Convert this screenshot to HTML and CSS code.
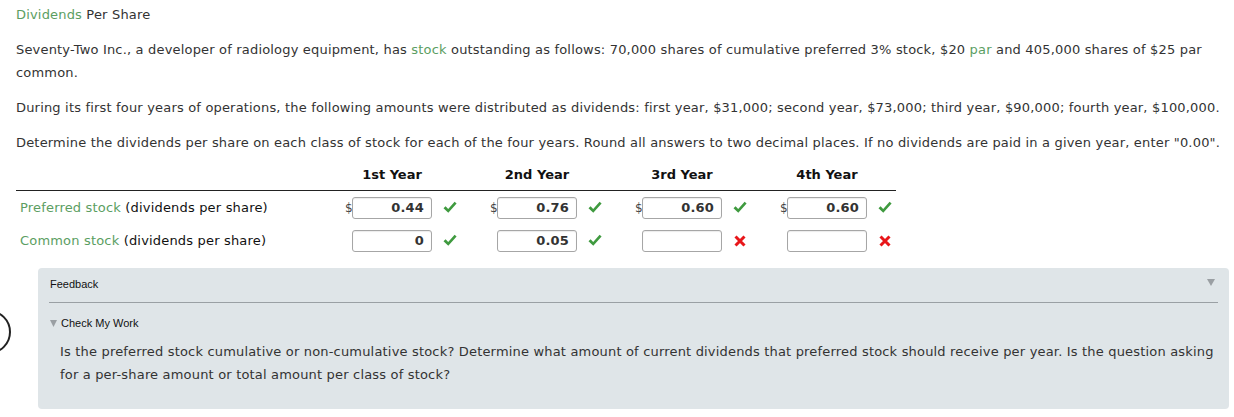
FILE: index.html
```html
<!DOCTYPE html>
<html>
<head>
<meta charset="utf-8">
<link rel="stylesheet" href="styles.css">
</head>
<body>
<div class="edge-circle"></div>
<div class="page">
  <div class="title"><span class="term">Dividends</span> Per Share</div>
  <p class="para">Seventy-Two Inc., a developer of radiology equipment, has <span class="term">stock</span> outstanding as follows: 70,000 shares of cumulative preferred 3% stock, $20 <span class="term">par</span> and 405,000 shares of $25 par common.</p>
  <p class="para">During its first four years of operations, the following amounts were distributed as dividends: first year, $31,000; second year, $73,000; third year, $90,000; fourth year, $100,000.</p>
  <p class="para">Determine the dividends per share on each class of stock for each of the four years. Round all answers to two decimal places. If no dividends are paid in a given year, enter "0.00".</p>

  <div class="grid">
    <div class="hcell"></div>
    <div class="hcell"><span class="hlabel">1st Year</span></div>
    <div class="hcell"><span class="hlabel">2nd Year</span></div>
    <div class="hcell"><span class="hlabel">3rd Year</span></div>
    <div class="hcell"><span class="hlabel">4th Year</span></div>

    <div class="lcell"><span class="term">Preferred stock</span> (dividends per share)</div>
    <div class="cell"><span class="dollar">$</span><span class="inp">0.44</span><span class="mark ok"><svg width="14" height="13" viewBox="0 0 14 13"><path d="M0.5 7.2 L2.6 5.3 L5.2 8 L11.6 0.8 L13.6 2.6 L5.3 11.8 Z" fill="#3f9a3f"/></svg></span></div>
    <div class="cell"><span class="dollar">$</span><span class="inp">0.76</span><span class="mark ok"><svg width="14" height="13" viewBox="0 0 14 13"><path d="M0.5 7.2 L2.6 5.3 L5.2 8 L11.6 0.8 L13.6 2.6 L5.3 11.8 Z" fill="#3f9a3f"/></svg></span></div>
    <div class="cell"><span class="dollar">$</span><span class="inp">0.60</span><span class="mark ok"><svg width="14" height="13" viewBox="0 0 14 13"><path d="M0.5 7.2 L2.6 5.3 L5.2 8 L11.6 0.8 L13.6 2.6 L5.3 11.8 Z" fill="#3f9a3f"/></svg></span></div>
    <div class="cell"><span class="dollar">$</span><span class="inp">0.60</span><span class="mark ok"><svg width="14" height="13" viewBox="0 0 14 13"><path d="M0.5 7.2 L2.6 5.3 L5.2 8 L11.6 0.8 L13.6 2.6 L5.3 11.8 Z" fill="#3f9a3f"/></svg></span></div>

    <div class="lcell"><span class="term">Common stock</span> (dividends per share)</div>
    <div class="cell"><span class="dollar"></span><span class="inp">0</span><span class="mark ok"><svg width="14" height="13" viewBox="0 0 14 13"><path d="M0.5 7.2 L2.6 5.3 L5.2 8 L11.6 0.8 L13.6 2.6 L5.3 11.8 Z" fill="#3f9a3f"/></svg></span></div>
    <div class="cell"><span class="dollar"></span><span class="inp">0.05</span><span class="mark ok"><svg width="14" height="13" viewBox="0 0 14 13"><path d="M0.5 7.2 L2.6 5.3 L5.2 8 L11.6 0.8 L13.6 2.6 L5.3 11.8 Z" fill="#3f9a3f"/></svg></span></div>
    <div class="cell"><span class="dollar"></span><span class="inp"></span><span class="mark bad"><svg width="12" height="12" viewBox="0 0 12 12"><path d="M1.5 1.5 L10.5 10.5 M10.5 1.5 L1.5 10.5" stroke="#e8161a" stroke-width="3"/></svg></span></div>
    <div class="cell"><span class="dollar"></span><span class="inp"></span><span class="mark bad"><svg width="12" height="12" viewBox="0 0 12 12"><path d="M1.5 1.5 L10.5 10.5 M10.5 1.5 L1.5 10.5" stroke="#e8161a" stroke-width="3"/></svg></span></div>
  </div>

  <div class="feedback">
    <div class="fb-head">
      <span>Feedback</span>
      <svg class="fb-toggle" width="8" height="7" viewBox="0 0 8 7"><path d="M0 0 L8 0 L4 7 Z" fill="#9a9fa3"/></svg>
    </div>
    <div class="cmw"><svg width="7" height="7" viewBox="0 0 7 7"><path d="M0 0 L7 0 L3.5 7 Z" fill="#9a9fa3"/></svg><span>Check My Work</span></div>
    <p class="fb-text">Is the preferred stock cumulative or non-cumulative stock? Determine what amount of current dividends that preferred stock should receive per year. Is the question asking for a per-share amount or total amount per class of stock?</p>
  </div>
</div>
</body>
</html>
```

FILE: styles.css
```css
html, body {
  margin: 0;
  padding: 0;
  background: #fff;
}
body {
  font-family: "DejaVu Sans", Verdana, sans-serif;
  font-size: 13px;
  letter-spacing: 0.18px;
  color: #333;
  position: relative;
  overflow: hidden;
  height: 417px;
}
.page {
  padding: 3px 5px 0 16px;
}
.term {
  color: #5b9e62;
}
.title {
  line-height: 23px;
}
.para {
  margin: 12px 0 0;
  line-height: 23px;
}
.grid {
  display: grid;
  grid-template-columns: 325px 145px 145px 145px 120px;
  width: 880px;
  margin-top: 6px;
}
.hcell {
  height: 30px;
  line-height: 30px;
  border-bottom: 1px solid #222;
  font-weight: bold;
  color: #111;
  letter-spacing: 0;
}
.hlabel {
  display: block;
  width: 80px;
  margin-left: 11px;
  text-align: center;
  white-space: nowrap;
}
.lcell {
  height: 33px;
  line-height: 33px;
  padding-left: 4px;
  color: #111;
}
.cell {
  height: 33px;
  display: flex;
  align-items: center;
}
.dollar {
  width: 7px;
  margin-left: 4px;
  font-size: 12px;
  letter-spacing: 0;
  color: #444;
}
.inp {
  box-sizing: border-box;
  width: 80px;
  height: 22px;
  border: 1px solid #a6a6a6;
  border-radius: 3px;
  box-shadow: inset 0 1px 1px rgba(0,0,0,0.08);
  background: #fff;
  text-align: right;
  padding-right: 7px;
  line-height: 20px;
  font-weight: bold;
  color: #333;
}
.mark {
  display: flex;
  align-items: center;
  margin-left: 11px;
}
.mark.bad {
  margin-left: 12px;
}
.feedback {
  margin: 11px 0 0 22px;
  background: #dfe5e8;
  border-radius: 4px;
  padding: 9px 11px 23px;
}
.fb-head {
  display: flex;
  justify-content: space-between;
  align-items: flex-start;
  font-family: "Liberation Sans", Arial, sans-serif;
  font-size: 11px;
  letter-spacing: 0;
  line-height: 14px;
  color: #111;
  padding: 0 0 11px 1px;
  border-bottom: 1px solid #9aa0a4;
}
.fb-toggle {
  margin: 2px 3px 0 0;
}
.cmw {
  display: flex;
  align-items: center;
  gap: 4px;
  margin-top: 13px;
  padding-left: 1px;
  font-family: "Liberation Sans", Arial, sans-serif;
  font-size: 11px;
  letter-spacing: 0;
  line-height: 14px;
  color: #111;
}
.fb-text {
  margin: 10px 0 0;
  padding-left: 11px;
  line-height: 23px;
  color: #333;
}
.edge-circle {
  position: absolute;
  left: -33px;
  top: 310px;
  width: 40px;
  height: 40px;
  border: 2px solid #222;
  border-radius: 50%;
}
```
